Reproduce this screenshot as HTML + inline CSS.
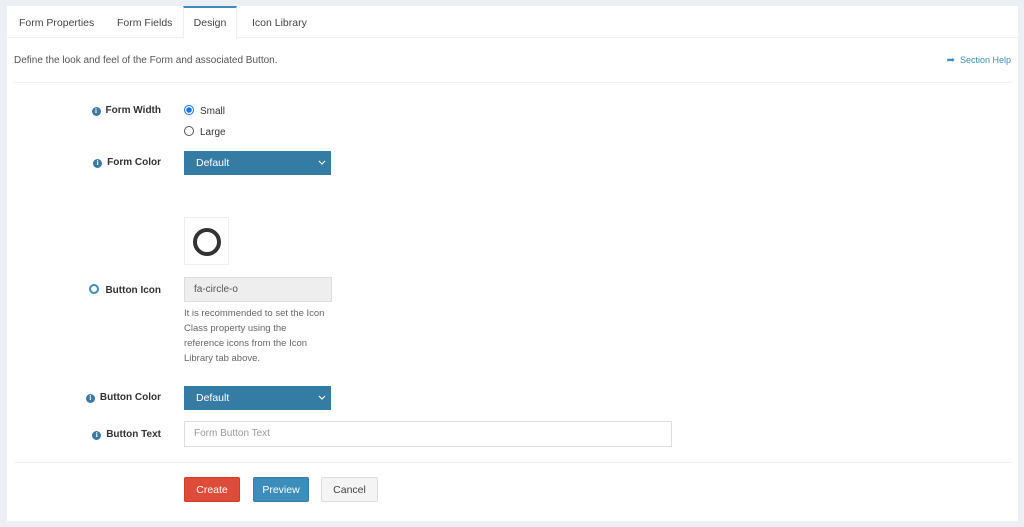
<!DOCTYPE html>
<html><head><style>
*{box-sizing:border-box;margin:0;padding:0}
body{width:1024px;height:527px;background:#ecf0f5;font-family:"Liberation Sans",sans-serif;font-size:10px;color:#333;position:relative;overflow:hidden}
.panel{position:absolute;left:7px;top:6px;width:1011px;height:515px;background:#fff}
.tabs{position:absolute;left:0;top:0;width:1011px;height:32px;border-bottom:1px solid #f0f0f0}
.tab{position:absolute;top:0;height:32px;line-height:34px;color:#444;font-size:10.5px}
.tab.act{border-top:2px solid #3c8dbc;border-left:1px solid #f0f0f0;border-right:1px solid #f0f0f0;background:#fff;height:33px;line-height:31px;text-align:center}
.a{position:absolute;white-space:nowrap}
.lbl{font-weight:bold;font-size:10px;color:#333;right:857px}
.info{display:inline-block;width:9px;height:9px;border-radius:50%;background:#3c7aa6;color:#fff;font-size:7px;line-height:9px;text-align:center;font-weight:bold;vertical-align:0;margin-right:5px;font-family:"Liberation Serif",serif}
.sel{position:absolute;left:177px;width:147px;height:24px;background:#357ca5;color:#fff;font-size:10.5px;line-height:24px;padding-left:12px}
.sel svg{position:absolute;right:5px;top:9px}
.hr{position:absolute;left:7px;width:997px;height:1px;background:#f0f0f0}
.btn{position:absolute;top:471px;height:25px;line-height:25px;text-align:center;font-size:10.5px;border-radius:2px}
</style></head><body>
<div class="panel">
<div class="tabs">
<div class="tab" style="left:12px">Form Properties</div>
<div class="tab" style="left:110px">Form Fields</div>
<div class="tab act" style="left:176px;width:54px">Design</div>
<div class="tab" style="left:245px">Icon Library</div>
</div>
<div class="a" style="left:7px;top:49px;color:#555;font-size:10px">Define the look and feel of the Form and associated Button.</div>
<div class="a" style="right:7px;top:49px;color:#3c8dbc;font-size:9px"><span style="font-size:10px">➦</span>&nbsp; Section Help</div>
<div class="hr" style="top:76px"></div>
<div class="a lbl" style="top:99px"><span class="info">i</span>Form Width</div>
<div class="a" style="left:177px;top:99px;font-size:10px"><span style="display:inline-block;width:10px;height:10px;border-radius:50%;border:1px solid #1a73e8;vertical-align:-1px;margin-right:6px;background:radial-gradient(#1a73e8 0 2.5px,#fff 3px)"></span>Small</div>
<div class="a" style="left:177px;top:120px;font-size:10px"><span style="display:inline-block;width:10px;height:10px;border-radius:50%;border:1px solid #555;vertical-align:-1px;margin-right:6px"></span>Large</div>
<div class="a lbl" style="top:151px"><span class="info">i</span>Form Color</div>
<div class="sel" style="top:145px">Default<svg width="8" height="5"><path d="M1 1L4 4L7 1" stroke="#fff" stroke-width="1.2" fill="none"/></svg></div>
<div class="a" style="left:177px;top:211px;width:45px;height:48px;border:1px solid #eee"><div style="position:absolute;left:8px;top:10px;width:28px;height:28px;border:4px solid #333;border-radius:50%"></div></div>
<div class="a lbl" style="top:278px"><span style="display:inline-block;width:10px;height:10px;border:2px solid #3c8dbc;border-radius:50%;vertical-align:-1px;margin-right:6px"></span>Button Icon</div>
<div class="a" style="left:177px;top:271px;width:148px;height:25px;background:#eee;border:1px solid #ddd;line-height:23px;padding-left:9px;color:#555;font-size:10px">fa-circle-o</div>
<div class="a" style="left:177px;top:300px;width:145px;white-space:normal;color:#666;font-size:9.5px;line-height:15px">It is recommended to set the Icon Class property using the reference icons from the Icon Library tab above.</div>
<div class="a lbl" style="top:386px"><span class="info">i</span>Button Color</div>
<div class="sel" style="top:380px">Default<svg width="8" height="5"><path d="M1 1L4 4L7 1" stroke="#fff" stroke-width="1.2" fill="none"/></svg></div>
<div class="a lbl" style="top:423px"><span class="info">i</span>Button Text</div>
<div class="a" style="left:177px;top:415px;width:488px;height:26px;border:1px solid #ddd;line-height:24px;padding-left:9px;color:#999;font-size:10px">Form Button Text</div>
<div class="hr" style="top:456px"></div>
<div class="btn" style="left:177px;width:56px;background:#dd4b39;color:#fff;border:1px solid #d73925">Create</div>
<div class="btn" style="left:246px;width:56px;background:#3c8dbc;color:#fff;border:1px solid #367fa9">Preview</div>
<div class="btn" style="left:314px;width:57px;background:#f4f4f4;color:#444;border:1px solid #ddd">Cancel</div>
</div>
</body></html>
